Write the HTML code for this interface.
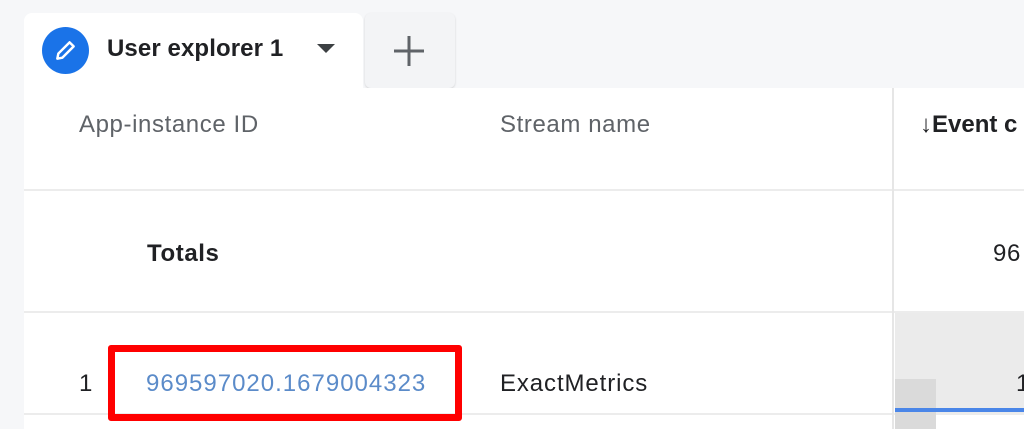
<!DOCTYPE html>
<html><head><meta charset="utf-8"><style>
*{margin:0;padding:0;box-sizing:border-box}
body{width:1024px;height:429px;overflow:hidden;background:#f6f7f9;font-family:"Liberation Sans",sans-serif;position:relative}
.a{position:absolute}
.t{font-size:24px;line-height:26px;white-space:nowrap;letter-spacing:0.6px}
</style></head><body>
<div class="a" style="left:24px;top:13px;width:339px;height:80px;background:#fff;border-radius:8px 8px 0 0"></div>
<div class="a" style="left:365px;top:13px;width:90px;height:75px;background:#f3f4f6;border-radius:6px;box-shadow:0 1px 2px rgba(0,0,0,.15)"></div>
<div class="a" style="left:24px;top:88px;width:1000px;height:341px;background:#fff"></div>
<svg class="a" style="left:42px;top:27px" width="47" height="47" viewBox="0 0 46 46"><circle cx="23" cy="23" r="23" fill="#1a73e8"/><path d="M15 31 L16 26 L27 15 L31 19 L20 30 Z" fill="none" stroke="#fff" stroke-width="2.4" stroke-linejoin="round"/></svg>
<div class="a t" style="left:107px;top:36px;font-size:24px;letter-spacing:0.1px;font-weight:bold;color:#202124">User explorer 1</div>
<svg class="a" style="left:317px;top:44px" width="18" height="10"><path d="M0 0H18L9 9Z" fill="#3c4043"/></svg>
<svg class="a" style="left:393px;top:35px" width="32" height="32"><path d="M16 1V31M1 16H31" stroke="#5f6368" stroke-width="3"/></svg>
<div class="a" style="left:24px;top:189px;width:1000px;height:2px;background:#ececec"></div>
<div class="a" style="left:24px;top:311px;width:1000px;height:2px;background:#ececec"></div>
<div class="a" style="left:24px;top:413px;width:1000px;height:2px;background:#ececec"></div>
<div class="a" style="left:892px;top:88px;width:2px;height:341px;background:#e6e6e6"></div>
<div class="a" style="left:895px;top:313px;width:129px;height:100px;background:#ebebeb"></div>
<div class="a" style="left:895px;top:379px;width:41px;height:50px;background:#dadada"></div>
<div class="a" style="left:895px;top:408px;width:129px;height:4px;background:#4a86e8"></div>
<div class="a t" style="left:79px;top:112px;color:#5f6368">App-instance ID</div>
<div class="a t" style="left:500px;top:112px;color:#5f6368">Stream name</div>
<div class="a t" style="left:920px;top:112px;color:#202124;font-weight:bold;letter-spacing:0">↓Event c</div>
<div class="a t" style="left:147px;top:241px;font-weight:bold;color:#202124">Totals</div>
<div class="a t" style="left:993px;top:241px;color:#202124">96</div>
<div class="a t" style="left:79px;top:371px;color:#202124">1</div>
<div class="a t" style="left:146px;top:371px;color:#5b8bc9;letter-spacing:1px">969597020.1679004323</div>
<div class="a t" style="left:500px;top:371px;color:#202124;letter-spacing:0.9px">ExactMetrics</div>
<div class="a t" style="left:1016px;top:371px;color:#202124">1</div>
<div class="a" style="left:108px;top:345px;width:354px;height:76px;border:7px solid #ff0000;border-radius:3px"></div>
</body></html>
